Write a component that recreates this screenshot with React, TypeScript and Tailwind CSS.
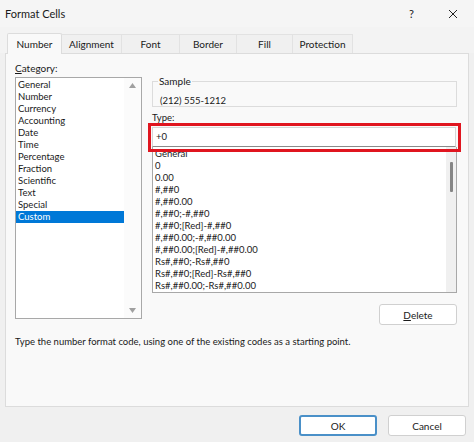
const categories = [
  "General",
  "Number",
  "Currency",
  "Accounting",
  "Date",
  "Time",
  "Percentage",
  "Fraction",
  "Scientific",
  "Text",
  "Special",
  "Custom",
];

const formats = [
  "General",
  "0",
  "0.00",
  "#,##0",
  "#,##0.00",
  "#,##0;-#,##0",
  "#,##0;[Red]-#,##0",
  "#,##0.00;-#,##0.00",
  "#,##0.00;[Red]-#,##0.00",
  "Rs#,##0;-Rs#,##0",
  "Rs#,##0;[Red]-Rs#,##0",
  "Rs#,##0.00;-Rs#,##0.00",
];

const tabs = [
  { label: "Number", w: "w-[55px]" },
  { label: "Alignment", w: "w-[60px]" },
  { label: "Font", w: "w-[58px]" },
  { label: "Border", w: "w-[57px]" },
  { label: "Fill", w: "w-[56px]" },
  { label: "Protection", w: "w-[60px]" },
];

export default function App() {
  return (
    <div className="w-[474px] h-[442px] bg-[#f0f0f0] overflow-hidden flex flex-col text-[9.5px] text-[#1a1a1a] font-['Lato',sans-serif] leading-[12px]">
      {/* title bar */}
      <div className="h-[27px] flex items-center pl-[5px] pr-[16px] bg-[#f5f5f5]">
        <span className="text-[11px] flex-1">Format Cells</span>
        <span className="text-[11px] mr-[34px]">?</span>
        <svg width="10" height="10" viewBox="0 0 10 10" className="stroke-[#222]">
          <path d="M1 1L9 9M9 1L1 9" strokeWidth="1" />
        </svg>
      </div>

      {/* tabs */}
      <div className="flex items-end pl-[7px] h-[26px] bg-[#f3f3f3] text-[10px]">
        {tabs.map((t, i) =>
          i === 0 ? (
            <div
              key={t.label}
              className={`${t.w} h-[21px] -mb-px z-10 flex items-center justify-center bg-[#f9f9f9] border border-b-0 border-[#dcdcdc] rounded-t-[2px]`}
            >
              {t.label}
            </div>
          ) : (
            <div
              key={t.label}
              className={`${t.w} h-[19px] flex items-center justify-center bg-[#f0f0f0] border-t border-r border-[#e2e2e2]`}
            >
              {t.label}
            </div>
          )
        )}
      </div>

      {/* panel */}
      <div className="mx-[5px] h-[354px] bg-[#f9f9f9] border border-[#dcdcdc] flex flex-col pl-[9px] pr-[9px] pt-[8px]">
        <div className="flex gap-[10px]">
          {/* category column */}
          <div className="w-[127px] flex flex-col">
            <div className="h-[15px] text-[10px]">
              <span className="underline">C</span>ategory:
            </div>
            <div className="h-[242px] bg-white border border-[#a8a8a8] flex">
              <div className="flex-1 pt-[1px]">
                {categories.map((c) => (
                  <div
                    key={c}
                    className={`h-[12px] pl-[2px] ${c === "Custom" ? "bg-[#0078d7] text-white" : ""}`}
                  >
                    {c}
                  </div>
                ))}
              </div>
              <div className="w-[17px] bg-[#fbfbfb] flex flex-col items-center justify-between py-[5px]">
                <svg width="7" height="5" viewBox="0 0 7 5">
                  <path d="M0 5L3.5 0L7 5Z" fill="#a0a0a0" />
                </svg>
                <svg width="7" height="5" viewBox="0 0 7 5">
                  <path d="M0 0L3.5 5L7 0Z" fill="#a0a0a0" />
                </svg>
              </div>
            </div>
          </div>

          {/* right column */}
          <div className="w-[305px] flex flex-col">
            <fieldset className="h-[31px] mt-[14px] border border-[#dcdcdc] px-[5px] pt-0">
              <legend className="px-[1px] text-[10px] leading-[10px]">Sample</legend>
              <div className="pl-[2px] pt-[9px]">(212) 555-1212</div>
            </fieldset>
            <div className="mt-[5px] h-[14px]">Type:</div>
            <div className="relative mt-[1px]">
              <div className="h-[20px] bg-white border border-[#d6d6d6] border-b-[#8a8a8a] flex items-center pl-[3px] mr-[1px]">
                +0
              </div>
              <div className="absolute -left-[4px] -right-[4px] -top-[4px] -bottom-[5px] border-[3px] border-[#e0151f] pointer-events-none" />
            </div>
            <div className="h-[146px] bg-white border border-[#a8a8a8] border-t-0 flex overflow-hidden">
              <div className="flex-1 pl-[2px] pt-[1px]">
                {formats.map((f) => (
                  <div key={f} className="h-[12px] whitespace-nowrap">
                    {f}
                  </div>
                ))}
              </div>
              <div className="w-[10px] bg-[#f0f0f0] pt-[15px] flex justify-center">
                <div className="w-[3px] h-[30px] bg-[#858585] rounded-[1px]" />
              </div>
            </div>
            <div className="flex justify-end mt-[11px]">
              <button className="w-[78px] h-[21px] bg-white border border-[#d0d0d0] rounded-[3px] text-[10px]">
                <span className="underline">D</span>elete
              </button>
            </div>
          </div>
        </div>
        <div className="mt-[11px]">
          Type the number format code, using one of the existing codes as a starting point.
        </div>
      </div>

      {/* footer */}
      <div className="flex justify-end gap-[11px] pr-[8px] pt-[8px]">
        <button className="w-[78px] h-[21px] bg-white border-2 border-[#4a90c8] rounded-[3px] text-[10px]">
          OK
        </button>
        <button className="w-[78px] h-[21px] bg-white border border-[#d0d0d0] rounded-[3px] text-[10px]">
          Cancel
        </button>
      </div>
    </div>
  );
}
